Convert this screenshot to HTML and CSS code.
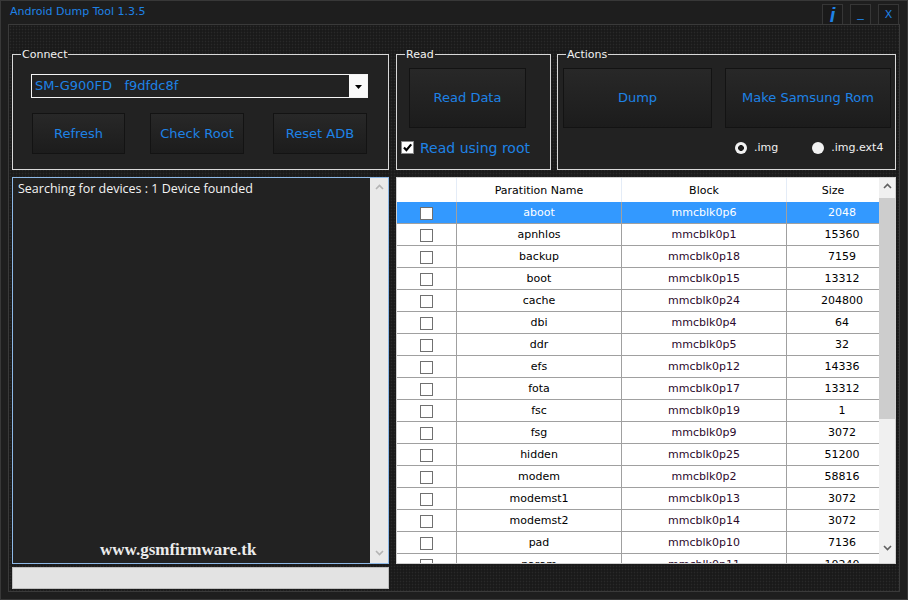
FILE: index.html
```html
<!DOCTYPE html>
<html>
<head>
<meta charset="utf-8">
<title>Android Dump Tool 1.3.5</title>
<link rel="stylesheet" href="styles.css">
</head>
<body>
<div class="window">
  <div class="titlebar">
    <span class="title">Android Dump Tool 1.3.5</span>
    <div class="tb-buttons">
      <span class="tb-btn tb-info">i</span>
      <span class="tb-btn tb-min">_</span>
      <span class="tb-btn tb-close">X</span>
    </div>
  </div>

  <div class="frame">
    <div class="top-row">
      <fieldset class="group connect">
        <legend>Connect</legend>
        <div class="connect-body">
          <div class="combo">
            <span class="combo-text">SM-G900FD&nbsp;&nbsp;&nbsp;f9dfdc8f</span>
            <span class="combo-arrow"><svg width="7" height="4" viewBox="0 0 7 4"><path d="M0 0H7L3.5 4Z" fill="#000"/></svg></span>
          </div>
          <div class="btn-row">
            <button class="btn btn-refresh">Refresh</button>
            <button class="btn btn-check">Check Root</button>
            <button class="btn btn-reset">Reset ADB</button>
          </div>
        </div>
      </fieldset>

      <fieldset class="group read">
        <legend>Read</legend>
        <div class="read-body">
          <button class="btn btn-read">Read Data</button>
          <label class="check-row">
            <span class="checkbox"><svg width="11" height="11" viewBox="0 0 11 11"><path d="M2 5.6L4.4 8.2L9.2 2.4" stroke="#000" stroke-width="2.2" fill="none"/></svg></span>
            <span class="check-label">Read using root</span>
          </label>
        </div>
      </fieldset>

      <fieldset class="group actions">
        <legend>Actions</legend>
        <div class="actions-body">
          <div class="action-btns">
            <button class="btn btn-dump">Dump</button>
            <button class="btn btn-rom">Make Samsung Rom</button>
          </div>
          <div class="radio-row">
            <span class="radio-item"><span class="radio radio-ring"></span><span class="radio-label">.img</span></span>
            <span class="radio-item"><span class="radio radio-solid"></span><span class="radio-label">.img.ext4</span></span>
          </div>
        </div>
      </fieldset>
    </div>

    <div class="bottom-row">
      <div class="left-col">
        <div class="log">
          <div class="log-content">
            <div class="log-text">Searching for devices : 1 Device founded</div>
            <div class="watermark">www.gsmfirmware.tk</div>
          </div>
          <div class="vscroll vscroll-log">
            <svg width="9" height="6" viewBox="0 0 9 6"><path d="M1 5L4.5 1.5L8 5" stroke="#b4b4b4" stroke-width="1.6" fill="none"/></svg>
            <svg width="9" height="6" viewBox="0 0 9 6"><path d="M1 1L4.5 4.5L8 1" stroke="#b4b4b4" stroke-width="1.6" fill="none"/></svg>
          </div>
        </div>
        <div class="status"></div>
      </div>

      <div class="grid-wrap">
        <div class="grid">
          <div class="grid-head">
            <div class="hcell"></div>
            <div class="hcell">Paratition Name</div>
            <div class="hcell">Block</div>
            <div class="hcell">Size</div>
          </div>
          <div class="grid-body">
            <div class="grow selected"><div class="cell"><span class="rbox"></span></div><div class="cell">aboot</div><div class="cell blk">mmcblk0p6</div><div class="cell size">2048</div></div>
            <div class="grow"><div class="cell"><span class="rbox"></span></div><div class="cell">apnhlos</div><div class="cell blk">mmcblk0p1</div><div class="cell size">15360</div></div>
            <div class="grow"><div class="cell"><span class="rbox"></span></div><div class="cell">backup</div><div class="cell blk">mmcblk0p18</div><div class="cell size">7159</div></div>
            <div class="grow"><div class="cell"><span class="rbox"></span></div><div class="cell">boot</div><div class="cell blk">mmcblk0p15</div><div class="cell size">13312</div></div>
            <div class="grow"><div class="cell"><span class="rbox"></span></div><div class="cell">cache</div><div class="cell blk">mmcblk0p24</div><div class="cell size">204800</div></div>
            <div class="grow"><div class="cell"><span class="rbox"></span></div><div class="cell">dbi</div><div class="cell blk">mmcblk0p4</div><div class="cell size">64</div></div>
            <div class="grow"><div class="cell"><span class="rbox"></span></div><div class="cell">ddr</div><div class="cell blk">mmcblk0p5</div><div class="cell size">32</div></div>
            <div class="grow"><div class="cell"><span class="rbox"></span></div><div class="cell">efs</div><div class="cell blk">mmcblk0p12</div><div class="cell size">14336</div></div>
            <div class="grow"><div class="cell"><span class="rbox"></span></div><div class="cell">fota</div><div class="cell blk">mmcblk0p17</div><div class="cell size">13312</div></div>
            <div class="grow"><div class="cell"><span class="rbox"></span></div><div class="cell">fsc</div><div class="cell blk">mmcblk0p19</div><div class="cell size">1</div></div>
            <div class="grow"><div class="cell"><span class="rbox"></span></div><div class="cell">fsg</div><div class="cell blk">mmcblk0p9</div><div class="cell size">3072</div></div>
            <div class="grow"><div class="cell"><span class="rbox"></span></div><div class="cell">hidden</div><div class="cell blk">mmcblk0p25</div><div class="cell size">51200</div></div>
            <div class="grow"><div class="cell"><span class="rbox"></span></div><div class="cell">modem</div><div class="cell blk">mmcblk0p2</div><div class="cell size">58816</div></div>
            <div class="grow"><div class="cell"><span class="rbox"></span></div><div class="cell">modemst1</div><div class="cell blk">mmcblk0p13</div><div class="cell size">3072</div></div>
            <div class="grow"><div class="cell"><span class="rbox"></span></div><div class="cell">modemst2</div><div class="cell blk">mmcblk0p14</div><div class="cell size">3072</div></div>
            <div class="grow"><div class="cell"><span class="rbox"></span></div><div class="cell">pad</div><div class="cell blk">mmcblk0p10</div><div class="cell size">7136</div></div>
            <div class="grow"><div class="cell"><span class="rbox"></span></div><div class="cell">param</div><div class="cell blk">mmcblk0p11</div><div class="cell size">10240</div></div>
          </div>
        </div>
        <div class="vscroll vscroll-grid">
          <div class="sb-arrow"><svg width="9" height="6" viewBox="0 0 9 6"><path d="M1 5L4.5 1.5L8 5" stroke="#606060" stroke-width="1.6" fill="none"/></svg></div>
          <div class="sb-thumb"></div>
          <div class="sb-track"></div>
          <div class="sb-arrow sb-down"><svg width="9" height="6" viewBox="0 0 9 6"><path d="M1 1L4.5 4.5L8 1" stroke="#606060" stroke-width="1.6" fill="none"/></svg></div>
        </div>
      </div>
    </div>
  </div>
</div>
</body>
</html>
```

FILE: styles.css
```css
* { box-sizing: border-box; }

body {
  margin: 0;
  background: #1e1e1e;
  font-family: "DejaVu Sans", "Liberation Sans", sans-serif;
}

.window {
  width: 908px;
  height: 600px;
  border: 1px solid #383838;
  background: #1e1e1e;
  display: flex;
  flex-direction: column;
  overflow: hidden;
}

/* ---------- title bar ---------- */
.titlebar {
  height: 23px;
  flex: none;
  display: flex;
  align-items: flex-start;
}

.title {
  margin: 4px 0 0 9px;
  font-size: 11px;
  line-height: 14px;
  color: #1e82e6;
}

.tb-buttons {
  margin: 3px 8px 0 auto;
  display: flex;
  gap: 7px;
}

.tb-btn {
  width: 21px;
  height: 21px;
  border: 1px solid #363636;
  background: #1a1a1a;
  color: #1e82e6;
  display: flex;
  align-items: center;
  justify-content: center;
  font-size: 11px;
  line-height: 1;
}

.tb-info {
  font-family: "Liberation Sans", sans-serif;
  font-weight: bold;
  font-style: italic;
  font-size: 20px;
  padding-top: 1px;
}

.tb-min { font-size: 13px; padding-bottom: 5px; }

/* ---------- frame ---------- */
.frame {
  flex: 1;
  margin: 0 7px 7px 7px;
  border: 1px solid #3a3a3a;
  background-color: #1a1a1a;
  background-image: radial-gradient(#292929 0.7px, transparent 1.1px);
  background-size: 3px 3px;
  padding: 23px 3px 2px 3px;
  display: flex;
  flex-direction: column;
}

.top-row {
  height: 122px;
  display: flex;
  flex: none;
}

.group {
  margin: 0;
  padding: 0;
  min-width: 0;
  height: 122px;
  border: 1px solid #d8d8d8;
  background: #222222;
}

.group legend {
  margin-left: 8px;
  padding: 0 1px;
  font-size: 11px;
  line-height: 13px;
  color: #f2f2f2;
}

.connect { width: 377px; }
.read { width: 155px; margin-left: 7px; }
.actions { width: 339px; margin-left: 6px; }

/* connect */
.connect-body { padding: 13px 0 0 18px; }

.combo {
  width: 337px;
  height: 24px;
  border: 1px solid #f4f4f4;
  background: #222;
  display: flex;
}

.combo-text {
  flex: 1;
  padding-left: 3px;
  font-size: 13px;
  line-height: 22px;
  color: #1e82e6;
}

.combo-arrow {
  width: 18px;
  background: #fafafa;
  display: flex;
  align-items: center;
  justify-content: center;
  padding-top: 1px;
}

.btn-row {
  margin-top: 15px;
  padding-left: 1px;
  display: flex;
}

.btn {
  height: 41px;
  padding: 0;
  border: 1px solid #131313;
  background: linear-gradient(#282828, #1c1c1c);
  color: #1e82e6;
  font-family: "DejaVu Sans", sans-serif;
  font-size: 13px;
}

.btn-refresh { width: 93px; }
.btn-check { width: 94px; margin-left: 25px; }
.btn-reset { width: 94px; margin-left: 29px; }

/* read */
.read-body { padding: 7px 0 0 4px; }

.btn-read {
  display: block;
  width: 117px;
  height: 60px;
  margin-left: 8px;
  padding-bottom: 2px;
}

.check-row {
  margin-top: 13px;
  display: flex;
  align-items: center;
  height: 13px;
}

.checkbox {
  width: 13px;
  height: 13px;
  background: #fff;
  border: 1px solid #8a8a8a;
  display: flex;
  align-items: center;
  justify-content: center;
}

.check-label {
  margin-left: 6px;
  font-size: 14px;
  line-height: 16px;
  color: #1e82e6;
}

/* actions */
.actions-body { padding: 7px 0 0 5px; }

.action-btns { display: flex; }
.btn-dump { width: 149px; height: 60px; padding-bottom: 2px; }
.btn-rom { width: 166px; height: 60px; margin-left: 13px; padding-bottom: 2px; }

.radio-row {
  margin-top: 13px;
  padding-left: 172px;
  display: flex;
  gap: 34px;
  height: 13px;
  align-items: center;
}

.radio-item { display: flex; align-items: center; }

.radio {
  width: 12px;
  height: 12px;
  border-radius: 50%;
  background: #f2f2f2;
}

.radio-ring {
  background: radial-gradient(circle, #1c1c1c 0 2.6px, #f2f2f2 3.2px);
}

.radio-label {
  margin-left: 7px;
  font-size: 11px;
  line-height: 13px;
  color: #f0f0f0;
}

/* ---------- bottom ---------- */
.bottom-row {
  margin-top: 7px;
  height: 412px;
  display: flex;
  gap: 7px;
}

.left-col {
  width: 377px;
  display: flex;
  flex-direction: column;
  gap: 3px;
}

.log {
  height: 387px;
  border: 1px solid #8db8e6;
  background: #222;
  display: flex;
}

.log-content {
  flex: 1;
  display: flex;
  flex-direction: column;
}

.log-text {
  padding: 2px 0 0 5px;
  font-family: "Open Sans", sans-serif;
  font-size: 12.5px;
  line-height: 18px;
  color: #f4f4f4;
}

.watermark {
  margin-top: auto;
  margin-bottom: 3px;
  padding-left: 87px;
  font-family: "Liberation Serif", serif;
  font-weight: bold;
  font-size: 17px;
  line-height: 20px;
  color: #ececec;
}

.vscroll-log {
  width: 18px;
  background: #e9e9e9;
  display: flex;
  flex-direction: column;
  align-items: center;
  justify-content: space-between;
  padding: 6px 0 7px;
}

.status {
  height: 22px;
  background: #e3e3e3;
  border: 1px solid #bdbdbd;
}

/* ---------- data grid ---------- */
.grid-wrap {
  width: 500px;
  height: 387px;
  border: 1px solid #d0d0d0;
  background: #fff;
  display: flex;
  overflow: hidden;
}

.grid {
  width: 482px;
  overflow: hidden;
  font-size: 11px;
  color: #000;
}

.grid-head,
.grow {
  display: grid;
  grid-template-columns: 60px 165px 165px 92px;
}

.grid-head { height: 24px; }

.hcell {
  border-right: 1px solid #e4ecf7;
  text-align: center;
  line-height: 23px;
  padding-top: 1px;
}
.hcell:last-child { border-right: none; }

.grow {
  height: 22px;
  border-bottom: 1px solid #a0a0a0;
}

.cell {
  border-right: 1px solid #a0a0a0;
  text-align: center;
  line-height: 20px;
  padding-top: 1px;
  display: flex;
  align-items: center;
  justify-content: center;
}
.cell:last-child { border-right: none; }

.blk { color: #2c0a2c; }
.size { padding-left: 18px; }

.grow.selected { background: #3399ff; }
.grow.selected .cell { color: #fff; }

.rbox {
  width: 13px;
  height: 13px;
  background: #fff;
  border: 1px solid #707070;
  margin-top: 1px;
}

.vscroll-grid {
  width: 16px;
  background: #f0f0f0;
  display: flex;
  flex-direction: column;
}

.sb-arrow {
  height: 20px;
  display: flex;
  align-items: center;
  justify-content: center;
  padding-bottom: 4px;
}

.sb-thumb {
  height: 221px;
  background: #cdcdcd;
}

.sb-track { flex: 1; }

.sb-down { padding-bottom: 0; padding-top: 6px; height: 24px; align-items: flex-start; }
```
